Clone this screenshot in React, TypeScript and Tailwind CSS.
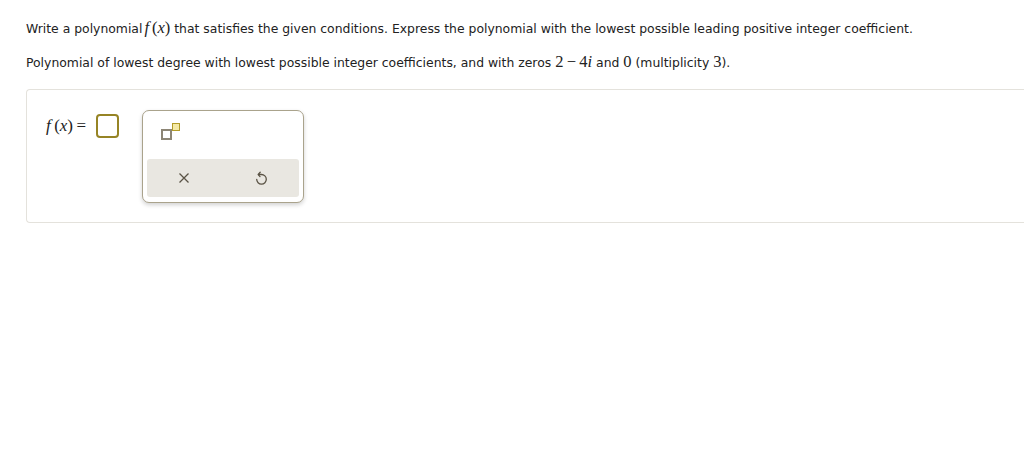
import React from "react";

const serif = { fontFamily: '"Liberation Serif", "Times New Roman", serif' };

const M = ({ children, italic = false }: { children: React.ReactNode; italic?: boolean }) => (
  <span className={`text-[16.5px] ${italic ? "italic" : ""}`} style={serif}>
    {children}
  </span>
);

export default function App() {
  return (
    <div className="w-[1024px] h-[476px] bg-white overflow-hidden text-[12.4px] text-[#222]" style={{ fontFamily: '"DejaVu Sans", Verdana, sans-serif' }}>
      <div className="pl-[26px] pt-[18px]">
        <p className="h-[20px] leading-[20px] whitespace-nowrap">
          Write a polynomial<span className="ml-[2px]" />
          <M italic>f</M>
          <span className="ml-[3px]" />
          <M>(</M>
          <M italic>x</M>
          <M>)</M> that satisfies the given conditions. Express the polynomial with the lowest possible leading positive integer coefficient.
        </p>
        <p className="mt-[14px] h-[20px] leading-[20px] whitespace-nowrap">
          Polynomial of lowest degree with lowest possible integer coefficients, and with zeros <M>2</M>
          <M>&thinsp;−&thinsp;</M>
          <M>4</M>
          <M italic>i</M> and <M>0</M> (multiplicity <M>3</M>).
        </p>
        <div className="mt-[17px] h-[134px] border border-r-0 border-[#e4e2dc] rounded-l-[4px] flex items-start pl-[19px] pt-[20px]">
          <div className="flex items-center mt-[3px]">
            <span className="text-[17px] text-[#222] whitespace-nowrap" style={serif}>
              <i>f</i>&thinsp;(<i>x</i>)&thinsp;=
            </span>
            <div className="ml-[10px] w-[23px] h-[24px] border-2 border-[#968425] rounded-[4px] bg-white" />
          </div>
          <div className="ml-[23px] w-[162px] h-[93px] border border-[#aaa38c] rounded-[7px] bg-white shadow-[0_2px_4px_rgba(0,0,0,0.18)] flex flex-col px-[4px] pb-[5px]">
            <div className="h-[44px] relative">
              <div className="absolute left-[14px] top-[18px] w-[11px] h-[11px] border-2 border-[#8c8575] bg-white" />
              <div className="absolute left-[25px] top-[12px] w-[8px] h-[8px] border border-[#b39c2a] bg-[#f4e9a6]" />
            </div>
            <div className="mt-[4px] h-[38px] bg-[#e9e7e1] rounded-[3px] flex items-center">
              <svg className="ml-[31px]" width="12" height="12" viewBox="0 0 12 12">
                <path d="M1.5 1.5 L10.5 10.5 M10.5 1.5 L1.5 10.5" stroke="#5a5345" strokeWidth="1.3" fill="none" />
              </svg>
              <svg className="ml-[64px]" width="14" height="16" viewBox="0 0 14 16">
                <path d="M4.5 4.5 L7.5 4.5 A4.8 4.8 0 1 1 2.7 9.3" stroke="#5a5345" strokeWidth="1.3" fill="none" strokeLinecap="round" />
                <path d="M6.2 2.2 L4.2 4.5 L6 6.6" stroke="#5a5345" strokeWidth="1.3" fill="none" strokeLinecap="round" strokeLinejoin="round" />
              </svg>
            </div>
          </div>
        </div>
      </div>
    </div>
  );
}
